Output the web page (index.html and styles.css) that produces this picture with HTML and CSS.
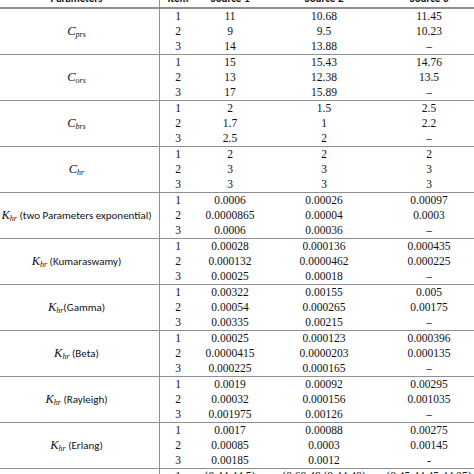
FILE: index.html
```html
<!DOCTYPE html>
<html>
<head>
<meta charset="utf-8">
<link rel="stylesheet" href="styles.css">
</head>
<body>
<div class="table">
  <div class="head">
    <div class="h param">Parameters</div>
    <div class="h">Item</div>
    <div class="h">Source 1</div>
    <div class="h">Source 2</div>
    <div class="h">Source 3</div>
  </div>

  <div class="group">
    <div class="param"><span><span class="m">C<sub>prs</sub></span></span></div>
    <div class="n">1</div><div class="n">11</div><div class="n">10.68</div><div class="n">11.45</div>
    <div class="n">2</div><div class="n">9</div><div class="n">9.5</div><div class="n">10.23</div>
    <div class="n">3</div><div class="n">14</div><div class="n">13.88</div><div class="n">–</div>
  </div>

  <div class="group">
    <div class="param"><span><span class="m">C<sub>ors</sub></span></span></div>
    <div class="n">1</div><div class="n">15</div><div class="n">15.43</div><div class="n">14.76</div>
    <div class="n">2</div><div class="n">13</div><div class="n">12.38</div><div class="n">13.5</div>
    <div class="n">3</div><div class="n">17</div><div class="n">15.89</div><div class="n">–</div>
  </div>

  <div class="group">
    <div class="param"><span><span class="m">C<sub>brs</sub></span></span></div>
    <div class="n">1</div><div class="n">2</div><div class="n">1.5</div><div class="n">2.5</div>
    <div class="n">2</div><div class="n">1.7</div><div class="n">1</div><div class="n">2.2</div>
    <div class="n">3</div><div class="n">2.5</div><div class="n">2</div><div class="n">–</div>
  </div>

  <div class="group">
    <div class="param"><span><span class="m">C<sub>hr</sub></span></span></div>
    <div class="n">1</div><div class="n">2</div><div class="n">2</div><div class="n">2</div>
    <div class="n">2</div><div class="n">3</div><div class="n">3</div><div class="n">3</div>
    <div class="n">3</div><div class="n">3</div><div class="n">3</div><div class="n">3</div>
  </div>

  <div class="group">
    <div class="param"><span><span class="m">K<sub>hr</sub></span> (two Parameters exponential)</span></div>
    <div class="n">1</div><div class="n">0.0006</div><div class="n">0.00026</div><div class="n">0.00097</div>
    <div class="n">2</div><div class="n">0.0000865</div><div class="n">0.00004</div><div class="n">0.0003</div>
    <div class="n">3</div><div class="n">0.0006</div><div class="n">0.00036</div><div class="n">–</div>
  </div>

  <div class="group">
    <div class="param"><span><span class="m">K<sub>hr</sub></span> (Kumaraswamy)</span></div>
    <div class="n">1</div><div class="n">0.00028</div><div class="n">0.000136</div><div class="n">0.000435</div>
    <div class="n">2</div><div class="n">0.000132</div><div class="n">0.0000462</div><div class="n">0.000225</div>
    <div class="n">3</div><div class="n">0.00025</div><div class="n">0.00018</div><div class="n">–</div>
  </div>

  <div class="group">
    <div class="param"><span><span class="m">K<sub>hr</sub></span>(Gamma)</span></div>
    <div class="n">1</div><div class="n">0.00322</div><div class="n">0.00155</div><div class="n">0.005</div>
    <div class="n">2</div><div class="n">0.00054</div><div class="n">0.000265</div><div class="n">0.00175</div>
    <div class="n">3</div><div class="n">0.00335</div><div class="n">0.00215</div><div class="n">–</div>
  </div>

  <div class="group">
    <div class="param"><span><span class="m">K<sub>hr</sub></span> (Beta)</span></div>
    <div class="n">1</div><div class="n">0.00025</div><div class="n">0.000123</div><div class="n">0.000396</div>
    <div class="n">2</div><div class="n">0.0000415</div><div class="n">0.0000203</div><div class="n">0.000135</div>
    <div class="n">3</div><div class="n">0.000225</div><div class="n">0.000165</div><div class="n">–</div>
  </div>

  <div class="group">
    <div class="param"><span><span class="m">K<sub>hr</sub></span> (Rayleigh)</span></div>
    <div class="n">1</div><div class="n">0.0019</div><div class="n">0.00092</div><div class="n">0.00295</div>
    <div class="n">2</div><div class="n">0.00032</div><div class="n">0.000156</div><div class="n">0.001035</div>
    <div class="n">3</div><div class="n">0.001975</div><div class="n">0.00126</div><div class="n">–</div>
  </div>

  <div class="group">
    <div class="param"><span><span class="m">K<sub>hr</sub></span> (Erlang)</span></div>
    <div class="n">1</div><div class="n">0.0017</div><div class="n">0.00088</div><div class="n">0.00275</div>
    <div class="n">2</div><div class="n">0.00085</div><div class="n">0.0003</div><div class="n">0.00145</div>
    <div class="n">3</div><div class="n">0.00185</div><div class="n">0.0012</div><div class="n">-</div>
  </div>

  <div class="group">
    <div class="param"></div>
    <div class="n">1</div><div class="n">(8.44 44.5)</div><div class="n">(8.68 48 (8.44 48)</div><div class="n">(8.45 44.45 44.95)</div>
    <div class="n">2</div><div class="n"></div><div class="n"></div><div class="n"></div>
    <div class="n">3</div><div class="n"></div><div class="n"></div><div class="n"></div>
  </div>
</div>
</body>
</html>
```

FILE: styles.css
```css
html, body {
  margin: 0;
  padding: 0;
  background: #ffffff;
  overflow: hidden;
}

.table {
  width: 474px;
  color: #111111;
  font-family: "Liberation Serif", serif;
  font-size: 11.5px;
}

.head {
  display: grid;
  grid-template-columns: 160px 36px 68px 120px 90px;
  height: 17px;
  margin-top: -10px;
  border-bottom: 2px solid #8f8f8f;
}

.h {
  font-family: "Carlito", "Lato", sans-serif;
  font-weight: bold;
  font-size: 11px;
  display: flex;
  align-items: center;
  justify-content: center;
  white-space: nowrap;
}

.group {
  display: grid;
  grid-template-columns: 160px 36px 68px 120px 90px;
  grid-template-rows: 15px 15px 15px;
  border-bottom: 1px solid #8f8f8f;
}

.param {
  grid-row: 1 / span 3;
  border-right: 1px solid #8f8f8f;
  display: flex;
  align-items: center;
  justify-content: center;
  padding-right: 6px;
  font-family: "Carlito", "Lato", sans-serif;
  font-size: 11px;
  white-space: nowrap;
}

.head .param {
  grid-row: auto;
}

.m {
  font-family: "Liberation Serif", serif;
  font-style: italic;
  font-size: 12.5px;
}

.m sub {
  font-size: 8px;
  vertical-align: -2px;
  line-height: 0;
}

.n {
  display: flex;
  align-items: center;
  justify-content: center;
  white-space: nowrap;
  line-height: 15px;
}
```
